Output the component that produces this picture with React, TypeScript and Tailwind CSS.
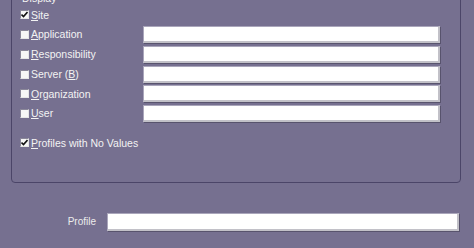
import React from 'react';

type Row = { label: string; key: string; field: boolean; checked: boolean };

const rows: Row[] = [
  { label: 'Site', key: 'S', field: false, checked: true },
  { label: 'Application', key: 'A', field: true, checked: false },
  { label: 'Responsibility', key: 'R', field: true, checked: false },
  { label: 'Server (B)', key: 'B', field: true, checked: false },
  { label: 'Organization', key: 'O', field: true, checked: false },
  { label: 'User', key: 'U', field: true, checked: false },
];

// underline the mnemonic letter like the old forms do
const Mnemonic = ({ text, letter }: { text: string; letter: string }) => {
  const i = text.indexOf(letter);
  if (i < 0) return <>{text}</>;
  return (
    <>
      {text.slice(0, i)}
      <span className="underline underline-offset-[1px]">{text[i]}</span>
      {text.slice(i + 1)}
    </>
  );
};

const CheckBox = ({ checked }: { checked: boolean }) => (
  <span className="w-[9px] h-[9px] shrink-0 bg-[#f7f7f7] border-t border-l border-[#8a8799] border-b border-r border-b-[#e6e6e6] border-r-[#e6e6e6] flex items-center justify-center">
    {checked && (
      <svg width="7" height="7" viewBox="0 0 7 7">
        <path d="M0.5 3.5 L2.5 5.5 L6.5 1" stroke="#111" strokeWidth="1.6" fill="none" />
      </svg>
    )}
  </span>
);

const Field = ({ className }: { className: string }) => (
  <div
    className={`bg-white border-t border-l border-[#aaa6bb] border-b-2 border-r-2 border-b-[#c2c1c8] border-r-[#c2c1c8] shadow-[1px_1px_0_#58536d] ${className}`}
  />
);

export default function App() {
  return (
    <div className="w-[474px] h-[248px] overflow-hidden bg-[#767090] text-[#f3f3f3] font-['Liberation_Sans',Arial,sans-serif] text-[10.5px]">
      {/* Display frame */}
      <div className="ml-[11px] mt-[-10px] w-[450px] h-[193px] border border-[#4b4568] rounded-[4px]">
        <div className="h-[14px] leading-[14px] pl-[10px]">Display</div>
        {rows.map((r) => (
          <div key={r.label} className="h-[19.75px] flex items-center pl-[8px]">
            <div className="w-[123px] flex items-center gap-[2px]">
              <CheckBox checked={r.checked} />
              <span className="leading-none">
                <Mnemonic text={r.label} letter={r.key} />
              </span>
            </div>
            {r.field && <Field className="w-[297px] h-[17px]" />}
          </div>
        ))}
        <div className="mt-[9.5px] h-[19.75px] flex items-center pl-[8px] gap-[2px]">
          <CheckBox checked={true} />
          <span className="leading-none">
            <Mnemonic text="Profiles with No Values" letter="P" />
          </span>
        </div>
      </div>

      {/* Profile */}
      <div className="mt-[30px] flex items-center h-[18px]">
        <div className="w-[96px] text-right text-[10px] leading-none text-[#ececec]">Profile</div>
        <Field className="ml-[11px] w-[352px] h-[18px]" />
      </div>
    </div>
  );
}
